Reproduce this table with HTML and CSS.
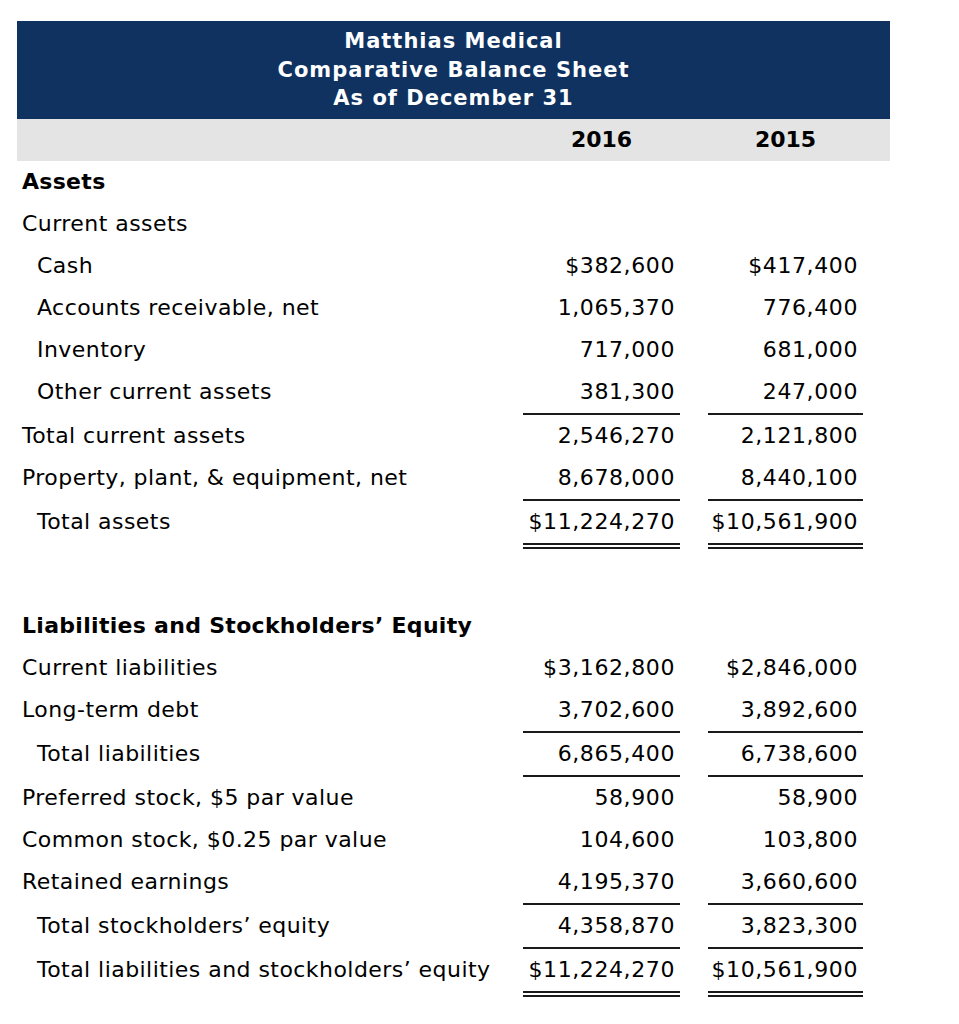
FILE: index.html
```html
<!DOCTYPE html>
<html lang="en">
<head>
<meta charset="utf-8">
<title>Matthias Medical – Comparative Balance Sheet</title>
<link rel="stylesheet" href="styles.css">
</head>
<body>
<div class="sheet">
  <div class="title">
    <div>Matthias Medical</div>
    <div>Comparative Balance Sheet</div>
    <div>As of December 31</div>
  </div>
  <div class="row years">
    <span></span><span class="yr">2016</span><span class="yr">2015</span>
  </div>

  <div class="row head"><span class="label">Assets</span></div>
  <div class="row"><span class="label">Current assets</span><span></span><span></span></div>
  <div class="row"><span class="label ind">Cash</span><span class="num">$382,600</span><span class="num">$417,400</span></div>
  <div class="row"><span class="label ind">Accounts receivable, net</span><span class="num">1,065,370</span><span class="num">776,400</span></div>
  <div class="row"><span class="label ind">Inventory</span><span class="num">717,000</span><span class="num">681,000</span></div>
  <div class="row"><span class="label ind">Other current assets</span><span class="num ul">381,300</span><span class="num ul">247,000</span></div>
  <div class="row"><span class="label">Total current assets</span><span class="num">2,546,270</span><span class="num">2,121,800</span></div>
  <div class="row"><span class="label">Property, plant, &amp; equipment, net</span><span class="num ul">8,678,000</span><span class="num ul">8,440,100</span></div>
  <div class="row"><span class="label ind">Total assets</span><span class="num dbl">$11,224,270</span><span class="num dbl">$10,561,900</span></div>

  <div class="row head gap"><span class="label">Liabilities and Stockholders’ Equity</span></div>
  <div class="row"><span class="label">Current liabilities</span><span class="num">$3,162,800</span><span class="num">$2,846,000</span></div>
  <div class="row"><span class="label">Long-term debt</span><span class="num ul">3,702,600</span><span class="num ul">3,892,600</span></div>
  <div class="row"><span class="label ind">Total liabilities</span><span class="num ul">6,865,400</span><span class="num ul">6,738,600</span></div>
  <div class="row"><span class="label">Preferred stock, $5 par value</span><span class="num">58,900</span><span class="num">58,900</span></div>
  <div class="row"><span class="label">Common stock, $0.25 par value</span><span class="num">104,600</span><span class="num">103,800</span></div>
  <div class="row"><span class="label">Retained earnings</span><span class="num ul">4,195,370</span><span class="num ul">3,660,600</span></div>
  <div class="row"><span class="label ind">Total stockholders’ equity</span><span class="num ul">4,358,870</span><span class="num ul">3,823,300</span></div>
  <div class="row"><span class="label ind">Total liabilities and stockholders’ equity</span><span class="num dbl">$11,224,270</span><span class="num dbl">$10,561,900</span></div>
</div>
</body>
</html>
```

FILE: styles.css
```css
html, body {
  margin: 0;
  padding: 0;
  background: #ffffff;
}

body {
  font-family: "DejaVu Sans", Verdana, sans-serif;
  font-size: 22px;
  color: #000000;
}

.sheet {
  width: 873px;
  margin: 21px 0 0 17px;
}

.title {
  background: #0f3261;
  color: #ffffff;
  font-weight: bold;
  font-size: 21px;
  line-height: 28.5px;
  letter-spacing: 1px;
  text-align: center;
  height: 99px;
  box-sizing: border-box;
  padding-top: 6px;
  border-bottom: 1px solid #3d5a82;
}

.row {
  display: grid;
  grid-template-columns: 1fr 157px 155px;
  column-gap: 28px;
  padding-right: 27px;
  line-height: 42px;
}

.years {
  background: #e4e4e4;
  height: 42px;
  margin-top: -1px;
}

.yr {
  font-weight: bold;
  text-align: center;
}

.head {
  font-weight: bold;
}

.head .label {
  letter-spacing: 0.3px;
}

.gap {
  margin-top: 56px;
}

.label {
  padding-left: 5px;
  white-space: nowrap;
  letter-spacing: 0.45px;
}

.label.ind {
  padding-left: 20px;
}

.num {
  text-align: right;
  padding-right: 5px;
  white-space: nowrap;
  letter-spacing: 0.6px;
}

.ul {
  border-bottom: 2px solid #1a1a1a;
}

.dbl {
  border-bottom: 6px double #1a1a1a;
}
```
